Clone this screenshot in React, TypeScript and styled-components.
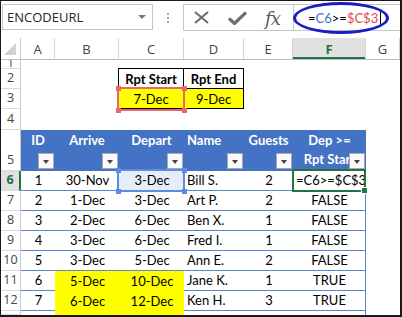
import React from 'react';
import styled, { createGlobalStyle } from 'styled-components';

const GlobalStyle = createGlobalStyle`
  html, body { margin: 0; padding: 0; background: #fff; }
  body { font-family: "Lato", "Liberation Sans", sans-serif; }
`;

const COLS = '20px 34px 64px 65px 60px 49px 73px 1fr';
const UI_FONT = '"Open Sans", "Noto Sans", sans-serif';
const TABLE_LINE = '#5b84cb';
const GREEN = '#217346';

type Row = { id: string; arrive: string; depart: string; name: string; guests: string; result: string; hot?: boolean };

const rows: Row[] = [
  { id: '1', arrive: '30-Nov', depart: '3-Dec', name: 'Bill S.', guests: '2', result: '=C6>=$C$3' },
  { id: '2', arrive: '1-Dec', depart: '3-Dec', name: 'Art P.', guests: '2', result: 'FALSE' },
  { id: '3', arrive: '2-Dec', depart: '6-Dec', name: 'Ben X.', guests: '1', result: 'FALSE' },
  { id: '4', arrive: '3-Dec', depart: '6-Dec', name: 'Fred I.', guests: '1', result: 'FALSE' },
  { id: '5', arrive: '3-Dec', depart: '5-Dec', name: 'Ann E.', guests: '2', result: 'FALSE' },
  { id: '6', arrive: '5-Dec', depart: '10-Dec', name: 'Jane K.', guests: '1', result: 'TRUE', hot: true },
  { id: '7', arrive: '6-Dec', depart: '12-Dec', name: 'Ken H.', guests: '3', result: 'TRUE', hot: true },
];

const columns = ['A', 'B', 'C', 'D', 'E', 'F', 'G'];

export default function App() {
  return (
    <>
      <GlobalStyle />
      <Frame>
        <FormulaBar>
          <NameBox>
            <span>ENCODEURL</span>
            <DropArrow />
          </NameBox>
          <Grip>
            <Dot />
            <Dot />
            <Dot />
          </Grip>
          <ButtonsBox>
            <IconSlot $w={17} $ml={9}>
              <svg width="17" height="13" viewBox="0 0 17 13">
                <path d="M2 1 L15 12 M15 1 L2 12" stroke="#6f6f6f" strokeWidth="2.2" fill="none" />
              </svg>
            </IconSlot>
            <IconSlot $w={19} $ml={18}>
              <svg width="19" height="14" viewBox="0 0 19 14">
                <path d="M1 7.5 L6.5 12.5 L18 1.5" stroke="#6f6f6f" strokeWidth="3.2" fill="none" />
              </svg>
            </IconSlot>
            <Fx>fx</Fx>
          </ButtonsBox>
          <FormulaBox>
            <span>=</span>
            <RefText $color="#3e6fd3">C6</RefText>
            <span>&gt;=</span>
            <RefText $color="#e5484d">$C$3</RefText>
            <Caret />
          </FormulaBox>
        </FormulaBar>

        <HeaderRow>
          <Corner>
            <svg width="14" height="14" viewBox="0 0 14 14">
              <polygon points="13,1 13,13 1,13" fill="#d2d2d2" />
            </svg>
          </Corner>
          {columns.map(c => (
            <ColHead key={c} $active={c === 'F'}>{c}</ColHead>
          ))}
        </HeaderRow>

        <SheetRow $h={9}>
          <RowHead $lift>1</RowHead>
        </SheetRow>
        <SheetRow $h={20}>
          <RowHead>2</RowHead>
          <Cell />
          <Cell />
          <BoxCell $bold>Rpt Start</BoxCell>
          <BoxCell $bold>Rpt End</BoxCell>
        </SheetRow>
        <SheetRow $h={20}>
          <RowHead>3</RowHead>
          <Cell />
          <Cell />
          <BoxCell $fill="#ffff00">7-Dec</BoxCell>
          <BoxCell $fill="#ffff00">9-Dec</BoxCell>
        </SheetRow>
        <SheetRow $h={21}>
          <RowHead>4</RowHead>
        </SheetRow>
        <SheetRow $h={41}>
          <RowHead>5</RowHead>
          <TableHead>ID<FilterButton /></TableHead>
          <TableHead>Arrive<FilterButton /></TableHead>
          <TableHead>Depart<FilterButton /></TableHead>
          <TableHead $left>Name<FilterButton /></TableHead>
          <TableHead>Guests<FilterButton /></TableHead>
          <TableHead>
            <span>Dep &gt;=</span>
            <span>Rpt Start</span>
            <FilterButton />
          </TableHead>
        </SheetRow>

        {rows.map((r, i) => (
          <SheetRow key={r.id} $h={20}>
            <RowHead $active={i === 0}>{i + 6}</RowHead>
            <Cell $line>{r.id}</Cell>
            <Cell $line={!r.hot} $fill={r.hot ? '#ffff00' : undefined}>{r.arrive}</Cell>
            <Cell $line={!r.hot} $fill={r.hot ? '#ffff00' : i === 0 ? '#e6edf9' : undefined}>{r.depart}</Cell>
            <Cell $line $left>{r.name}</Cell>
            <Cell $line>{r.guests}</Cell>
            <Cell $line $edge $left={i === 0}>{r.result}</Cell>
          </SheetRow>
        ))}
        <SheetRow $h={4}>
          <RowHead />
          <Cell />
          <Cell $fill="#ffff00" />
          <Cell $fill="#ffff00" />
          <Cell />
          <Cell />
          <Cell $edge />
        </SheetRow>

        <Ellipse />
        <RefBox $color="#e8696b" style={{ left: 116, top: 86, width: 68, height: 24 }}>
          <Handle $pos="tl" $color="#e8696b" />
          <Handle $pos="tr" $color="#e8696b" />
          <Handle $pos="bl" $color="#e8696b" />
          <Handle $pos="br" $color="#e8696b" />
        </RefBox>
        <RefBox $color="#5a8ce0" style={{ left: 116, top: 168, width: 68, height: 23 }}>
          <Handle $pos="tl" $color="#5a8ce0" />
          <Handle $pos="tr" $color="#5a8ce0" />
          <Handle $pos="bl" $color="#5a8ce0" />
          <Handle $pos="br" $color="#5a8ce0" />
        </RefBox>
        <ActiveCell>
          <FillHandle />
        </ActiveCell>
      </Frame>
    </>
  );
}

const Frame = styled.div`
  position: relative;
  width: 402px;
  height: 317px;
  box-sizing: border-box;
  border-style: solid;
  border-color: #1a1a1a;
  border-width: 1px 2px 2px 1px;
  overflow: hidden;
  background: #fff;
`;

const FormulaBar = styled.div`
  display: flex;
  align-items: flex-start;
  height: 37px;
  padding-top: 3px;
  box-sizing: border-box;
`;

const NameBox = styled.div`
  margin-left: 1px;
  width: 151px;
  height: 26px;
  box-sizing: border-box;
  border: 1px solid #c6c6c6;
  display: flex;
  align-items: center;
  justify-content: space-between;
  padding: 0 6px 0 4px;
  font-family: ${UI_FONT};
  font-size: 13px;
  color: #262626;
`;

const DropArrow = styled.div`
  width: 0;
  height: 0;
  border-left: 4px solid transparent;
  border-right: 4px solid transparent;
  border-top: 4px solid #7a7a7a;
`;

const Grip = styled.div`
  display: flex;
  flex-direction: column;
  gap: 2px;
  margin: 9px 0 0 14px;
`;

const Dot = styled.div`
  width: 2px;
  height: 2px;
  background: #a6a6a6;
`;

const ButtonsBox = styled.div`
  margin-left: 14px;
  width: 110px;
  height: 27px;
  box-sizing: border-box;
  border: 1px solid #c6c6c6;
  border-right: none;
  display: flex;
  align-items: center;
`;

const IconSlot = styled.div<{ $w: number; $ml: number }>`
  width: ${p => p.$w}px;
  margin-left: ${p => p.$ml}px;
  display: flex;
`;

const Fx = styled.div`
  margin-left: 18px;
  font-family: "DejaVu Serif", "Liberation Serif", serif;
  font-style: italic;
  font-size: 18px;
  color: #5a5a5a;
  letter-spacing: -1px;
  line-height: 1;
  padding-top: 2px;
`;

const FormulaBox = styled.div`
  flex: 1;
  height: 27px;
  box-sizing: border-box;
  border: 1px solid #c6c6c6;
  border-right: none;
  display: flex;
  align-items: center;
  padding-left: 14px;
  font-size: 13px;
  color: #000;
`;

const RefText = styled.span<{ $color: string }>`
  color: ${p => p.$color};
`;

const Caret = styled.div`
  width: 1px;
  height: 16px;
  margin-left: 2px;
  background: #000;
`;

const HeaderRow = styled.div`
  display: grid;
  grid-template-columns: ${COLS};
  height: 22px;
  box-sizing: border-box;
  border-bottom: 1px solid #bfbfbf;
`;

const Corner = styled.div`
  display: flex;
  align-items: flex-end;
  justify-content: flex-end;
  padding: 0 3px 3px 0;
  box-sizing: border-box;
  border-right: 1px solid #c6c6c6;
`;

const ColHead = styled.div<{ $active?: boolean }>`
  display: flex;
  align-items: center;
  justify-content: center;
  box-sizing: border-box;
  border-right: 1px solid #d4d4d4;
  font-family: ${UI_FONT};
  font-size: 13px;
  color: #444;
  background: ${p => (p.$active ? '#e1e1e1' : 'transparent')};
  ${p => p.$active && `
    color: ${GREEN};
    font-weight: 700;
    box-shadow: inset 0 -2px 0 ${GREEN};
  `}
`;

const SheetRow = styled.div<{ $h: number }>`
  display: grid;
  grid-template-columns: ${COLS};
  height: ${p => p.$h}px;
`;

const RowHead = styled.div<{ $active?: boolean; $lift?: boolean }>`
  display: flex;
  align-items: flex-end;
  justify-content: center;
  box-sizing: border-box;
  border-right: 1px solid #c6c6c6;
  border-bottom: 1px solid #dadada;
  font-family: ${UI_FONT};
  font-size: 12.5px;
  line-height: 18px;
  color: #444;
  overflow: hidden;
  padding-bottom: 1px;
  ${p => p.$lift && 'padding-bottom: 0; line-height: 11px;'}
  ${p => p.$active && `
    background: #e1e1e1;
    color: ${GREEN};
    font-weight: 700;
    border-right: 2px solid ${GREEN};
  `}
`;

const Cell = styled.div<{ $left?: boolean; $fill?: string; $line?: boolean; $edge?: boolean }>`
  display: flex;
  align-items: flex-end;
  justify-content: ${p => (p.$left ? 'flex-start' : 'center')};
  box-sizing: border-box;
  padding: 0 2px 1px 3px;
  font-size: 13px;
  line-height: 18px;
  white-space: nowrap;
  overflow: hidden;
  color: #000;
  background: ${p => p.$fill || 'transparent'};
  border-bottom: ${p => (p.$line ? `1px solid ${TABLE_LINE}` : 'none')};
  border-right: ${p => (p.$edge ? `1px solid ${TABLE_LINE}` : 'none')};
`;

const BoxCell = styled.div<{ $bold?: boolean; $fill?: string }>`
  margin: -1px 0 0 -1px;
  display: flex;
  align-items: flex-end;
  justify-content: center;
  border: 1px solid #000;
  font-size: 13px;
  line-height: 18px;
  font-weight: ${p => (p.$bold ? 700 : 400)};
  background: ${p => p.$fill || '#fff'};
  color: #000;
  white-space: nowrap;
`;

const TableHead = styled.div<{ $left?: boolean }>`
  position: relative;
  display: flex;
  flex-direction: column;
  justify-content: flex-start;
  align-items: ${p => (p.$left ? 'flex-start' : 'center')};
  box-sizing: border-box;
  padding: 1px 2px 0 ${p => (p.$left ? '3px' : '2px')};
  background: #4472c4;
  color: #fff;
  font-size: 13px;
  font-weight: 700;
  line-height: 19px;
  white-space: nowrap;
  overflow: hidden;
`;

const FilterButton = styled.div`
  position: absolute;
  right: 1px;
  bottom: 2px;
  width: 16px;
  height: 16px;
  box-sizing: border-box;
  border: 1px solid #a9a9a9;
  background: #fafafa;
  &::after {
    content: '';
    position: absolute;
    left: 4px;
    top: 6px;
    border-left: 3.5px solid transparent;
    border-right: 3.5px solid transparent;
    border-top: 4px solid #444;
  }
`;

const Ellipse = styled.div`
  position: absolute;
  left: 292px;
  top: 1px;
  width: 96px;
  height: 32px;
  box-sizing: border-box;
  border: 3px solid #1c1cc6;
  border-radius: 50%;
`;

const RefBox = styled.div<{ $color: string }>`
  position: absolute;
  box-sizing: border-box;
  border: 2px solid ${p => p.$color};
`;

const Handle = styled.div<{ $pos: 'tl' | 'tr' | 'bl' | 'br'; $color: string }>`
  position: absolute;
  width: 5px;
  height: 5px;
  background: ${p => p.$color};
  ${p => (p.$pos[0] === 't' ? 'top: -3.5px;' : 'bottom: -3.5px;')}
  ${p => (p.$pos[1] === 'l' ? 'left: -3.5px;' : 'right: -3.5px;')}
`;

const ActiveCell = styled.div`
  position: absolute;
  left: 291px;
  top: 168px;
  width: 74px;
  height: 23px;
  box-sizing: border-box;
  border: 2px solid ${GREEN};
`;

const FillHandle = styled.div`
  position: absolute;
  right: -4px;
  bottom: -4px;
  width: 5px;
  height: 5px;
  background: ${GREEN};
  border: 1px solid #fff;
`;
